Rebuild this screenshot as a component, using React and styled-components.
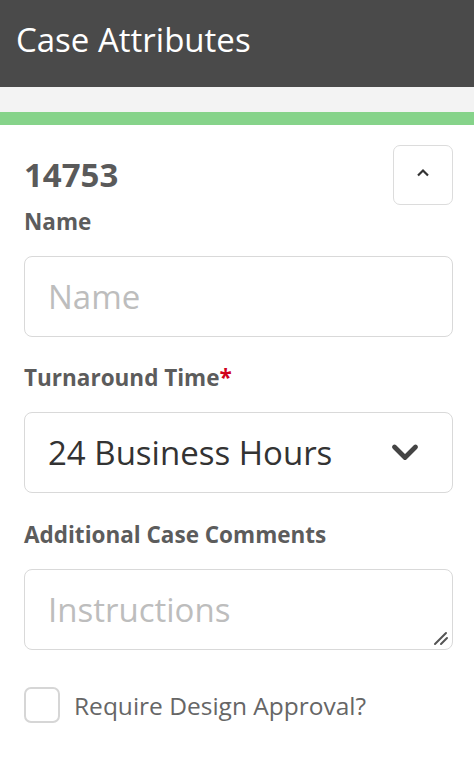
import React from 'react'
import styled, { createGlobalStyle } from 'styled-components'

const GlobalStyle = createGlobalStyle`
  html, body {
    margin: 0;
    padding: 0;
    background: #fff;
    font-family: "Open Sans", "Noto Sans", sans-serif;
  }
  * { box-sizing: border-box; }
`

const Header = styled.header`
  height: 87px;
  background: #4a4a4a;
  color: #fff;
  display: flex;
  align-items: center;
  padding: 0 16px 8px;
  font-size: 33px;
  font-weight: 400;
`

const Band = styled.div`
  height: 25px;
  background: #f3f3f3;
  border-bottom: 13px solid #86d38a;
  box-sizing: content-box;
`

const Body = styled.div`
  padding: 20px 21px 0 24px;
  display: flex;
  flex-direction: column;
`

const TopRow = styled.div`
  display: flex;
  justify-content: space-between;
  align-items: flex-start;
`

const CaseId = styled.h2`
  margin: 12px 0 0;
  font-size: 33px;
  font-weight: 700;
  color: #5a5a5a;
  line-height: 36px;
`

const CollapseButton = styled.button`
  width: 60px;
  height: 60px;
  border: 1px solid #dcdcdc;
  border-radius: 7px;
  background: #fff;
  display: flex;
  align-items: center;
  justify-content: center;
  padding: 0 0 5px;
  color: #333;
`

const Label = styled.label`
  display: block;
  font-size: 22.5px;
  font-weight: 700;
  color: #5c5c5c;
  line-height: 30px;
  margin: ${p => p.$top || 0}px 0 19px;
  span { color: #d0021b; }
`

const Field = styled.div`
  position: relative;
  height: 81px;
  border: 1px solid #d9d9d9;
  border-radius: 8px;
  display: flex;
  align-items: center;
  padding: 0 33px 0 23px;
  font-size: 33px;
  color: ${p => (p.$placeholder ? '#bdbdbd' : '#333')};
  justify-content: space-between;
`

const Grip = styled.svg`
  position: absolute;
  right: 2px;
  bottom: 3px;
`

const CheckRow = styled.label`
  display: flex;
  align-items: center;
  gap: 14px;
  margin-top: 37px;
  font-size: 24.5px;
  color: #666;
`

const Box = styled.span`
  width: 36px;
  height: 36px;
  border: 2px solid #d6d6d6;
  border-radius: 7px;
`

export default function App() {
  return (
    <>
      <GlobalStyle />
      <Header>Case Attributes</Header>
      <Band />
      <Body>
        <TopRow>
          <CaseId>14753</CaseId>
          <CollapseButton>
            <svg width="14" height="10" viewBox="0 0 14 10">
              <path d="M2 7.5 L7 2.5 L12 7.5" fill="none" stroke="#333" strokeWidth="2.2" />
            </svg>
          </CollapseButton>
        </TopRow>
        <Label $top={2}>Name</Label>
        <Field $placeholder>Name</Field>
        <Label $top={26}>Turnaround Time<span>*</span></Label>
        <Field>
          24 Business Hours
          <svg width="28" height="20" viewBox="0 0 28 20">
            <path d="M3.5 4 L14 14.5 L24.5 4" fill="none" stroke="#444" strokeWidth="4.8" strokeLinecap="round" strokeLinejoin="round" />
          </svg>
        </Field>
        <Label $top={27}>Additional Case Comments</Label>
        <Field $placeholder>
          Instructions
          <Grip width="18" height="16" viewBox="0 0 18 16">
            <path d="M3 14 L14 3 M9 14 L15 8" stroke="#555" strokeWidth="2" strokeLinecap="round" />
          </Grip>
        </Field>
        <CheckRow>
          <Box />
          Require Design Approval?
        </CheckRow>
      </Body>
    </>
  )
}
